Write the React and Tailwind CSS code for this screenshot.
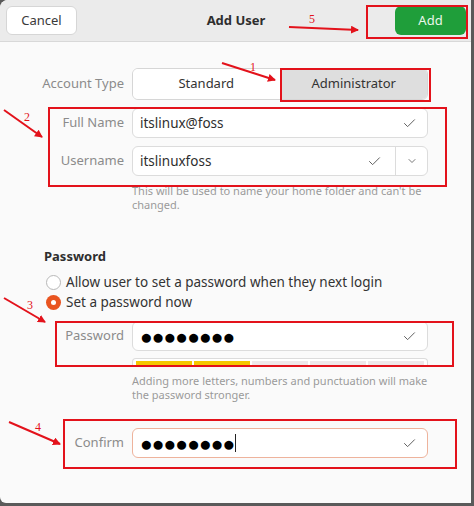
import React from "react";
import { Check, ChevronDown } from "lucide-react";

const font = { fontFamily: '"Noto Sans", "Open Sans", sans-serif' };

// a labelled entry row: label column + input column
const Row = ({ label, children, className = "" }) => (
  <div className={`flex items-center ${className}`}>
    <div className="w-[125px] pr-[1px] text-right text-[13px] text-[#8b8b8b]">{label}</div>
    <div className="ml-[7px] w-[296px]">{children}</div>
  </div>
);

const Entry = ({ value, dots, focused, caret }) => (
  <div
    className={`flex h-[30px] items-center rounded-[6px] border bg-white pl-[7px] pr-[10px] ${
      focused ? "border-[#eeb39c]" : "border-[#dcdcdc]"
    }`}
  >
    <div className="flex flex-1 items-center">
      {dots ? (
        <span className="text-[21px] leading-none tracking-[-0.9px] text-black">●●●●●●●●</span>
      ) : (
        <span className="text-[13.5px] text-[#2e2e2e]">{value}</span>
      )}
      {caret && <span className="ml-[1px] h-[18px] w-[1px] bg-[#222]" />}
    </div>
    <Check size={15} strokeWidth={1.5} className="text-[#555]" />
  </div>
);

const Radio = ({ checked, label }) => (
  <div className="flex h-[18px] items-center gap-[5px]">
    {checked ? (
      <span className="flex h-[15px] w-[15px] items-center justify-center rounded-full bg-[#e95420]">
        <span className="h-[5px] w-[5px] rounded-full bg-white" />
      </span>
    ) : (
      <span className="h-[15px] w-[15px] rounded-full border border-[#b8b8b8] bg-white" />
    )}
    <span className="text-[13.5px] text-[#333]">{label}</span>
  </div>
);

const Box = ({ className }) => (
  <div className={`pointer-events-none absolute border-2 border-[#e3121b] ${className}`} />
);

const Num = ({ n, className }) => (
  <span
    className={`absolute text-[12px] leading-none text-[#e3121b] ${className}`}
    style={{ fontFamily: '"Liberation Serif", serif' }}
  >
    {n}
  </span>
);

export default function App() {
  return (
    <div className="relative h-[506px] w-[474px] overflow-hidden bg-[#5a5a5a]" style={font}>
      <div className="h-[503px] w-[471px] overflow-hidden rounded-tl-[8px] rounded-bl-[6px] bg-[#fafafa]">
        {/* header bar */}
        <div className="flex h-[42px] items-center border-b border-[#d8d8d8] bg-[#ebebeb] pl-[6px] pr-[5px]">
          <button className="h-[29px] w-[71px] rounded-[6px] border border-[#d6d6d6] bg-white text-[13px] text-[#3a3a3a]">
            Cancel
          </button>
          <div className="flex-1 text-center text-[13px] font-bold text-[#2e2e2e]">Add User</div>
          <button className="h-[29px] w-[71px] rounded-[6px] bg-[#1f9e3a] text-[13px] text-[#eaf7ea]">
            Add
          </button>
        </div>

        {/* body */}
        <div className="pt-[26px]">
          <Row label="Account Type">
            <div className="flex h-[32px] overflow-hidden rounded-[6px] border border-[#d6d6d6] text-[13px] text-[#333]">
              <div className="flex flex-1 items-center justify-center bg-white">Standard</div>
              <div className="flex flex-1 items-center justify-center border-l border-[#d6d6d6] bg-[#dedede]">
                Administrator
              </div>
            </div>
          </Row>

          <Row label="Full Name" className="mt-[8px]">
            <Entry value="itslinux@foss" />
          </Row>

          <Row label="Username" className="mt-[8px]">
            <div className="flex h-[30px] items-center rounded-[6px] border border-[#dcdcdc] bg-white">
              <span className="flex-1 pl-[7px] text-[13.5px] text-[#2e2e2e]">itslinuxfoss</span>
              <Check size={15} strokeWidth={1.5} className="mr-[13px] text-[#555]" />
              <div className="flex h-full w-[32px] items-center justify-center border-l border-[#dcdcdc]">
                <ChevronDown size={12} strokeWidth={1.6} className="text-[#555]" />
              </div>
            </div>
          </Row>

          <Row label="" className="mt-[8px]">
            <p className="text-[11px] leading-[14px] text-[#9a9a9a]">
              This will be used to name your home folder and can't be changed.
            </p>
          </Row>

          <div className="ml-[44px] mt-[34px] text-[13px] font-bold leading-[20px] text-[#2e2e2e]">Password</div>

          <div className="ml-[46px] mt-[7px] flex flex-col gap-[2px]">
            <Radio label="Allow user to set a password when they next login" />
            <Radio checked label="Set a password now" />
          </div>

          <Row label="Password" className="mt-[10px]">
            <Entry dots />
          </Row>

          {/* strength bar, cut off at the bottom */}
          <Row label="" className="mt-[7px]">
            <div className="flex h-[8px] gap-[2px] rounded-t-[4px] border border-b-0 border-[#dcdcdc] bg-white px-[3px] pt-[2px]">
              <div className="flex-1 bg-[#f5c800]" />
              <div className="flex-1 bg-[#f5c800]" />
              <div className="flex-1 bg-[#eee8ea]" />
              <div className="flex-1 bg-[#eee8ea]" />
              <div className="flex-1 bg-[#eee8ea]" />
            </div>
          </Row>

          <Row label="" className="mt-[8px]">
            <p className="text-[11px] leading-[14px] text-[#9a9a9a]">
              Adding more letters, numbers and punctuation will make the password stronger.
            </p>
          </Row>

          <Row label="Confirm" className="mt-[26px]">
            <Entry dots focused caret />
          </Row>
        </div>
      </div>

      {/* annotations */}
      <Box className="left-[366px] top-[5px] h-[34px] w-[102px]" />
      <Box className="left-[280px] top-[68px] h-[34px] w-[151px]" />
      <Box className="left-[48px] top-[107px] h-[80px] w-[399px]" />
      <Box className="left-[55px] top-[321px] h-[46px] w-[399px]" />
      <Box className="left-[63px] top-[419px] h-[50px] w-[394px]" />

      <svg className="pointer-events-none absolute left-0 top-0" width="474" height="506">
        <defs>
          <marker id="ah" markerWidth="8" markerHeight="8" refX="7" refY="4" orient="auto" markerUnits="userSpaceOnUse">
            <path d="M0,0 L8,4 L0,8 z" fill="#e3121b" />
          </marker>
        </defs>
        <g stroke="#e3121b" strokeWidth="2" markerEnd="url(#ah)">
          <line x1="289" y1="27" x2="358" y2="30" />
          <line x1="222" y1="63" x2="275" y2="80" />
          <line x1="4" y1="110" x2="42" y2="137" />
          <line x1="4" y1="298" x2="45" y2="322" />
          <line x1="9" y1="422" x2="60" y2="444" />
        </g>
      </svg>
      <Num n="5" className="left-[309px] top-[13px]" />
      <Num n="1" className="left-[250px] top-[61px]" />
      <Num n="2" className="left-[24px] top-[111px]" />
      <Num n="3" className="left-[27px] top-[299px]" />
      <Num n="4" className="left-[35px] top-[421px]" />
    </div>
  );
}
